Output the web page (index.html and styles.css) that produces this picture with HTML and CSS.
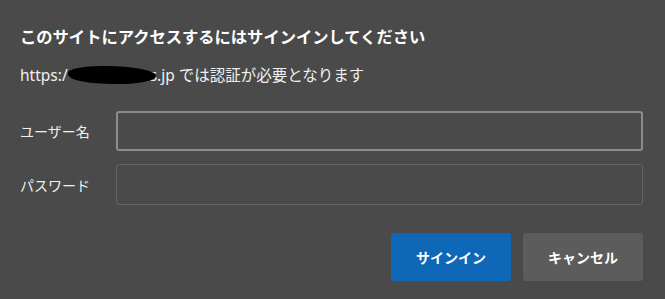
FILE: index.html
```html
<!DOCTYPE html>
<html lang="ja">
<head>
    <meta charset="UTF-8">
    <title>サインイン</title>
    <link rel="stylesheet" href="styles.css">
</head>
<body>
    <div class="dialog">
        <h1 class="title">このサイトにアクセスするにはサインインしてください</h1>
        <p class="origin">https:/<span class="redact"></span>s.jp では認証が必要となります</p>
        <form class="login">
            <div class="row">
                <label for="user">ユーザー名</label>
                <input type="text" id="user" class="field focused">
            </div>
            <div class="row">
                <label for="pass">パスワード</label>
                <input type="password" id="pass" class="field">
            </div>
            <div class="actions">
                <button type="submit" class="btn primary">サインイン</button>
                <button type="button" class="btn secondary">キャンセル</button>
            </div>
        </form>
    </div>
</body>
</html>
```

FILE: styles.css
```css
body {
    margin: 0;
    background-color: #4a4a4a;
    font-family: 'Segoe UI', 'Noto Sans', 'Noto Sans CJK JP', sans-serif;
    color: #ffffff;
}

.dialog {
    width: 665px;
    height: 299px;
    box-sizing: border-box;
    padding: 25px 22px 0 20px;
}

.title {
    margin: 0;
    font-size: 16.3px;
    font-weight: bold;
    line-height: 24px;
}

.origin {
    margin: 15px 0 0;
    font-size: 15.5px;
    line-height: 22px;
    color: #f0f0f0;
}

.redact {
    display: inline-block;
    width: 88px;
    height: 18px;
    margin-right: -6px;
    vertical-align: -3px;
    background-color: #000;
    border-radius: 40% 60% 45% 55%;
    position: relative;
}

.login {
    margin-top: 25px;
}

.row {
    display: flex;
    align-items: center;
    margin-bottom: 13px;
}

.row label {
    width: 96px;
    font-size: 14px;
    color: #f0f0f0;
}

.field {
    width: 527px;
    height: 41px;
    box-sizing: border-box;
    background-color: #4a4a4a;
    border: 1px solid #636363;
    border-radius: 3px;
    color: #fff;
    outline: none;
}

.field.focused {
    height: 40px;
    border: 2px solid #8c8c8c;
}

.actions {
    display: flex;
    justify-content: flex-end;
    gap: 12px;
    margin-top: 28px;
}

.btn {
    width: 120px;
    height: 48px;
    border: none;
    border-radius: 3px;
    color: #fff;
    font-family: inherit;
    font-size: 14px;
    font-weight: bold;
}

.primary {
    background-color: #0f67b8;
}

.secondary {
    background-color: #5c5c5c;
}
```
